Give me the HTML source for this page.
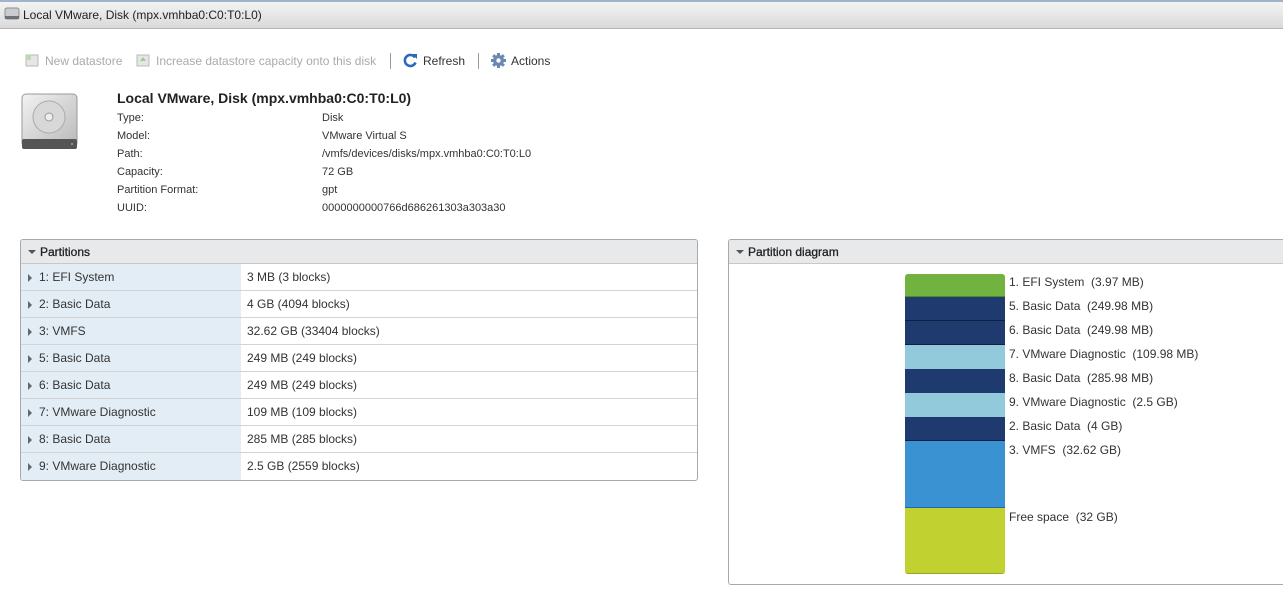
<!DOCTYPE html>
<html><head><meta charset="utf-8"><style>
*{box-sizing:border-box;margin:0;padding:0}
body{width:1283px;height:606px;overflow:hidden;background:#fff;font-family:"Liberation Sans",Arial,sans-serif;font-size:12px;color:#333;position:relative}
.top{position:absolute;left:0;top:0;width:1283px;height:29px;background:linear-gradient(#f4f4f4,#d9d9d9);border-top:2px solid #9fb3cc;border-bottom:1px solid #b5b5b5}
.top span{position:absolute;left:23px;top:6px;font-size:12px;color:#222}
.abs{position:absolute;white-space:nowrap}
.dis{color:#aaa}
.sep{position:absolute;width:1px;height:16px;background:#999;top:53px}
.panel{position:absolute;border:1px solid #a9a9a9;border-radius:3px;overflow:hidden}
.ph{height:24px;background:#e8e9ea;border-bottom:1px solid #c8c8c8;font-size:12px;padding:5px 0 0 19px;position:relative;color:#222;-webkit-text-stroke:0.3px #222}
.ph:before{content:"";position:absolute;left:7px;top:10px;border-left:4px solid transparent;border-right:4px solid transparent;border-top:4px solid #555}
.row{height:27px;border-bottom:1px solid #d4d4d4;display:flex}
.row:last-child{border-bottom:none}
.c1{width:220px;background:#e3edf5;padding:6px 0 0 18px;position:relative}
.c1:before{content:"";position:absolute;left:7px;top:10px;border-top:4px solid transparent;border-bottom:4px solid transparent;border-left:4px solid #666}
.c2{padding:6px 0 0 6px}
.seg{position:absolute;left:905px;width:100px}
.lbl{position:absolute;left:1009px;white-space:nowrap}
</style></head><body>
<div class="top">
<svg class="abs" style="left:4px;top:5px" width="16" height="14" viewBox="0 0 16 14"><rect x="1" y="1" width="14" height="11" rx="2" fill="#c9ccd0" stroke="#8a8f96"/><rect x="1" y="9" width="14" height="3" fill="#6c7077"/></svg>
<span>Local VMware, Disk (mpx.vmhba0:C0:T0:L0)</span></div>

<svg class="abs" style="left:25px;top:53px" width="14" height="14"><rect x="1" y="2" width="12" height="11" fill="#e6e6e6" stroke="#bbb"/><rect x="1" y="2" width="5" height="5" fill="#b8dcb0"/></svg>
<div class="abs dis" style="left:45px;top:54px">New datastore</div>
<svg class="abs" style="left:136px;top:53px" width="14" height="14"><rect x="1" y="2" width="12" height="11" fill="#e6e6e6" stroke="#bbb"/><path d="M7 4l3 4H4z" fill="#9ccc94"/></svg>
<div class="abs dis" style="left:156px;top:54px">Increase datastore capacity onto this disk</div>
<div class="sep" style="left:390px"></div>
<svg class="abs" style="left:403px;top:53px" width="15" height="15" viewBox="0 0 15 15"><path d="M12 4.5A5.5 5.5 0 1 0 12.5 9.5" fill="none" stroke="#2a6ab8" stroke-width="2.6"/><path d="M9 1h5v5z" fill="#2a6ab8"/></svg>
<div class="abs" style="left:423px;top:54px">Refresh</div>
<div class="sep" style="left:478px"></div>
<svg class="abs" style="left:490px;top:52px" width="17" height="17" viewBox="0 0 17 17"><circle cx="8.5" cy="8.5" r="5.5" fill="#6b88b4"/><g stroke="#6b88b4" stroke-width="3"><path d="M8.5 1v15M1 8.5h15M3.2 3.2l10.6 10.6M13.8 3.2L3.2 13.8"/></g><circle cx="8.5" cy="8.5" r="2.2" fill="#fff"/></svg>
<div class="abs" style="left:511px;top:54px">Actions</div>

<svg class="abs" style="left:21px;top:93px" width="57" height="58" viewBox="0 0 57 58"><defs><linearGradient id="g" x1="0" y1="0" x2="1" y2="1"><stop offset="0" stop-color="#f2f2f2"/><stop offset="1" stop-color="#b9b9b9"/></linearGradient></defs><rect x="1" y="1" width="55" height="53" rx="4" fill="url(#g)" stroke="#999"/><rect x="1" y="46" width="55" height="10" rx="2" fill="#555"/><circle cx="28" cy="24" r="16" fill="#d8d8d8" stroke="#aaa"/><circle cx="28" cy="24" r="4" fill="#eee" stroke="#999"/><circle cx="51" cy="51" r="1" fill="#6c6"/></svg>
<div class="abs" style="left:117px;top:90px;font-size:14px;font-weight:bold;color:#222">Local VMware, Disk (mpx.vmhba0:C0:T0:L0)</div>
<div class="abs" style="left:117px;top:109px;font-size:11px;line-height:18px">Type:<br>Model:<br>Path:<br>Capacity:<br>Partition Format:<br>UUID:</div>
<div class="abs" style="left:322px;top:109px;font-size:11px;line-height:18px">Disk<br>VMware Virtual S<br>/vmfs/devices/disks/mpx.vmhba0:C0:T0:L0<br>72 GB<br>gpt<br>0000000000766d686261303a303a30</div>

<div class="panel" style="left:20px;top:239px;width:678px;height:242px">
<div class="ph">Partitions</div>
<div class="row"><div class="c1">1: EFI System</div><div class="c2">3 MB (3 blocks)</div></div>
<div class="row"><div class="c1">2: Basic Data</div><div class="c2">4 GB (4094 blocks)</div></div>
<div class="row"><div class="c1">3: VMFS</div><div class="c2">32.62 GB (33404 blocks)</div></div>
<div class="row"><div class="c1">5: Basic Data</div><div class="c2">249 MB (249 blocks)</div></div>
<div class="row"><div class="c1">6: Basic Data</div><div class="c2">249 MB (249 blocks)</div></div>
<div class="row"><div class="c1">7: VMware Diagnostic</div><div class="c2">109 MB (109 blocks)</div></div>
<div class="row"><div class="c1">8: Basic Data</div><div class="c2">285 MB (285 blocks)</div></div>
<div class="row"><div class="c1">9: VMware Diagnostic</div><div class="c2">2.5 GB (2559 blocks)</div></div>
</div>

<div class="panel" style="left:728px;top:239px;width:570px;height:346px">
<div class="ph">Partition diagram</div>
</div>
<div class="seg" style="top:274px;height:23px;background:#72b33f;border-radius:3px 3px 0 0;border-bottom:1px solid #4f8a2a"></div>
<div class="seg" style="top:297px;height:24px;background:#1e3a6e;border-bottom:1px solid #0d1f44"></div>
<div class="seg" style="top:321px;height:24px;background:#1e3a6e;border-bottom:1px solid #0d1f44"></div>
<div class="seg" style="top:345px;height:24px;background:#92cadc"></div>
<div class="seg" style="top:369px;height:24px;background:#1e3a6e"></div>
<div class="seg" style="top:393px;height:24px;background:#92cadc"></div>
<div class="seg" style="top:417px;height:24px;background:#1e3a6e;border-bottom:1px solid #0d1f44"></div>
<div class="seg" style="top:441px;height:67px;background:#3a92d2;border-bottom:1px solid #2266aa"></div>
<div class="seg" style="top:508px;height:66px;background:#c1d12f;border-radius:0 0 3px 3px;border-bottom:1px solid #98a520"></div>
<div class="lbl" style="top:275px">1. EFI System &nbsp;(3.97 MB)</div>
<div class="lbl" style="top:299px">5. Basic Data &nbsp;(249.98 MB)</div>
<div class="lbl" style="top:323px">6. Basic Data &nbsp;(249.98 MB)</div>
<div class="lbl" style="top:347px">7. VMware Diagnostic &nbsp;(109.98 MB)</div>
<div class="lbl" style="top:371px">8. Basic Data &nbsp;(285.98 MB)</div>
<div class="lbl" style="top:395px">9. VMware Diagnostic &nbsp;(2.5 GB)</div>
<div class="lbl" style="top:419px">2. Basic Data &nbsp;(4 GB)</div>
<div class="lbl" style="top:443px">3. VMFS &nbsp;(32.62 GB)</div>
<div class="lbl" style="top:510px">Free space &nbsp;(32 GB)</div>
</body></html>
